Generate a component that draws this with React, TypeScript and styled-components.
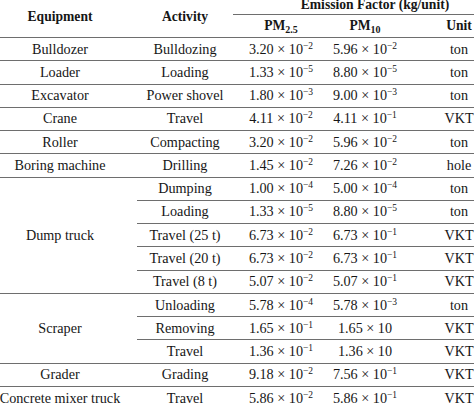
import React from 'react'
import styled, { createGlobalStyle } from 'styled-components'

const GlobalStyle = createGlobalStyle`
    html, body {
        margin: 0;
        padding: 0;
        background: #ffffff;
        overflow: hidden;
    }
    body {
        width: 474px;
        height: 407px;
    }
`

interface Sci {
    m: string
    e?: string
}

interface Row {
    equipment?: string
    span?: number
    activity: string
    pm25: Sci
    pm10: Sci
    unit: string
}

const ROWS: Row[] = [
    { equipment: 'Bulldozer', activity: 'Bulldozing', pm25: { m: '3.20', e: '−2' }, pm10: { m: '5.96', e: '−2' }, unit: 'ton' },
    { equipment: 'Loader', activity: 'Loading', pm25: { m: '1.33', e: '−5' }, pm10: { m: '8.80', e: '−5' }, unit: 'ton' },
    { equipment: 'Excavator', activity: 'Power shovel', pm25: { m: '1.80', e: '−3' }, pm10: { m: '9.00', e: '−3' }, unit: 'ton' },
    { equipment: 'Crane', activity: 'Travel', pm25: { m: '4.11', e: '−2' }, pm10: { m: '4.11', e: '−1' }, unit: 'VKT' },
    { equipment: 'Roller', activity: 'Compacting', pm25: { m: '3.20', e: '−2' }, pm10: { m: '5.96', e: '−2' }, unit: 'ton' },
    { equipment: 'Boring machine', activity: 'Drilling', pm25: { m: '1.45', e: '−2' }, pm10: { m: '7.26', e: '−2' }, unit: 'hole' },
    { equipment: 'Dump truck', span: 5, activity: 'Dumping', pm25: { m: '1.00', e: '−4' }, pm10: { m: '5.00', e: '−4' }, unit: 'ton' },
    { activity: 'Loading', pm25: { m: '1.33', e: '−5' }, pm10: { m: '8.80', e: '−5' }, unit: 'ton' },
    { activity: 'Travel (25 t)', pm25: { m: '6.73', e: '−2' }, pm10: { m: '6.73', e: '−1' }, unit: 'VKT' },
    { activity: 'Travel (20 t)', pm25: { m: '6.73', e: '−2' }, pm10: { m: '6.73', e: '−1' }, unit: 'VKT' },
    { activity: 'Travel (8 t)', pm25: { m: '5.07', e: '−2' }, pm10: { m: '5.07', e: '−1' }, unit: 'VKT' },
    { equipment: 'Scraper', span: 3, activity: 'Unloading', pm25: { m: '5.78', e: '−4' }, pm10: { m: '5.78', e: '−3' }, unit: 'ton' },
    { activity: 'Removing', pm25: { m: '1.65', e: '−1' }, pm10: { m: '1.65' }, unit: 'VKT' },
    { activity: 'Travel', pm25: { m: '1.36', e: '−1' }, pm10: { m: '1.36' }, unit: 'VKT' },
    { equipment: 'Grader', activity: 'Grading', pm25: { m: '9.18', e: '−2' }, pm10: { m: '7.56', e: '−1' }, unit: 'VKT' },
    { equipment: 'Concrete mixer truck', activity: 'Travel', pm25: { m: '5.86', e: '−2' }, pm10: { m: '5.86', e: '−1' }, unit: 'VKT' },
]

const COLUMNS = [154, 96, 96, 72, 116]

const RULE = '1.4px solid #6e6e6e'

const Page = styled.div`
    width: 474px;
    height: 407px;
    overflow: hidden;
    font-family: 'Liberation Serif', 'Times New Roman', serif;
    color: #161616;
`

const Table = styled.table`
    margin: -4px 0 0 -17px;
    table-layout: fixed;
    width: ${COLUMNS.reduce((a, b) => a + b, 0)}px;
    border-collapse: separate;
    border-spacing: 0;
`

const Col = styled.col<{ $width: number }>`
    width: ${(p) => p.$width}px;
`

const HeadCell = styled.th<{ $height?: number; $rule?: boolean }>`
    box-sizing: border-box;
    height: ${(p) => p.$height ?? 23}px;
    padding: 0;
    font-size: 13.6px;
    font-weight: bold;
    text-align: center;
    vertical-align: middle;
    white-space: nowrap;
    border-bottom: ${(p) => (p.$rule ? RULE : 'none')};
`

const Cell = styled.td`
    box-sizing: border-box;
    height: 23.27px;
    padding: 0;
    font-size: 14.2px;
    text-align: center;
    vertical-align: middle;
    white-space: nowrap;
    border-bottom: ${RULE};
`

const Sup = styled.sup`
    font-size: 9.5px;
    line-height: 0;
    vertical-align: 0.55em;
`

const Sub = styled.sub`
    font-size: 10px;
    line-height: 0;
    vertical-align: -0.3em;
`

const SciValue: React.FC<{ value: Sci }> = ({ value }) => (
    <>
        {value.m} × 10
        {value.e && <Sup>{value.e}</Sup>}
    </>
)

const App: React.FC = () => {
    return (
        <Page>
            <GlobalStyle />
            <Table>
                <colgroup>
                    {COLUMNS.map((w, i) => (
                        <Col key={i} $width={w} />
                    ))}
                </colgroup>
                <thead>
                    <tr>
                        <HeadCell rowSpan={2} $rule>
                            Equipment
                        </HeadCell>
                        <HeadCell rowSpan={2} $rule>
                            Activity
                        </HeadCell>
                        <HeadCell colSpan={3} $height={19} $rule>
                            Emission Factor (kg/unit)
                        </HeadCell>
                    </tr>
                    <tr>
                        <HeadCell $rule>
                            PM<Sub>2.5</Sub>
                        </HeadCell>
                        <HeadCell $rule>
                            PM<Sub>10</Sub>
                        </HeadCell>
                        <HeadCell $rule>Unit</HeadCell>
                    </tr>
                </thead>
                <tbody>
                    {ROWS.map((row, i) => (
                        <tr key={i}>
                            {row.equipment && <Cell rowSpan={row.span ?? 1}>{row.equipment}</Cell>}
                            <Cell>{row.activity}</Cell>
                            <Cell>
                                <SciValue value={row.pm25} />
                            </Cell>
                            <Cell>
                                <SciValue value={row.pm10} />
                            </Cell>
                            <Cell>{row.unit}</Cell>
                        </tr>
                    ))}
                </tbody>
            </Table>
        </Page>
    )
}

export default App
